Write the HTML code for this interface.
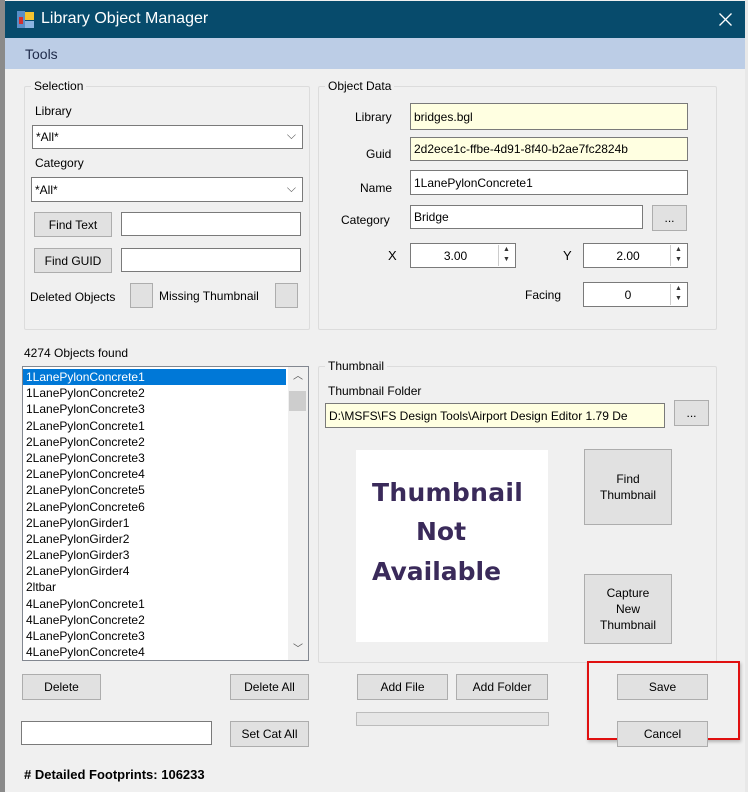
<!DOCTYPE html>
<html><head><meta charset="utf-8"><style>
*{box-sizing:border-box;margin:0;padding:0}
body{width:748px;height:792px;overflow:hidden;background:#f0f0f0;font-family:"Liberation Sans",sans-serif;font-size:12px;color:#000;position:relative}
.a{position:absolute}
.gb{position:absolute;border:1px solid #dcdcdc;border-radius:2px}
.gl{position:absolute;background:#f0f0f0;padding:0 3px;top:-9px;left:6px;line-height:16px}
.btn{position:absolute;background:#e1e1e1;border:1px solid #adadad;text-align:center;display:flex;align-items:center;justify-content:center;line-height:16px}
.tb{position:absolute;background:#fff;border:1px solid #7a7a7a;padding-left:3px;display:flex;align-items:center}
.y{background:#ffffe1}
.chk{position:absolute;width:23px;height:25px;background:#e1e1e1;border:1px solid #adadad}
.spin{position:absolute;right:1px;top:1px;bottom:1px;width:16px;border-left:1px solid #ccc;font-size:7px;line-height:10px;text-align:center;color:#333}
.list div{height:16.2px;line-height:16.2px;padding-left:3px;white-space:nowrap}
.tn{position:absolute;font-family:"DejaVu Sans",sans-serif;font-weight:bold;font-size:25px;line-height:30px;color:#3a2a5a;white-space:nowrap}
</style></head><body>
<div class="a" style="left:0;top:0;width:5px;height:792px;background:#8a8a8a"></div>
<div class="a" style="left:745px;top:0;width:3px;height:792px;background:#e8e8e8"></div>
<div class="a" style="left:5px;top:1px;width:740px;height:37px;background:#074b6c"></div>
<div class="a" style="left:17px;top:11px;width:18px;height:17px">
<div class="a" style="left:0;top:0;width:8px;height:17px;background:#5a8fc7"></div>
<div class="a" style="left:2px;top:6px;width:4px;height:7px;background:#d23030"></div>
<div class="a" style="left:8px;top:1px;width:9px;height:8px;background:#f4c430"></div>
<div class="a" style="left:8px;top:10px;width:9px;height:7px;background:#8cb4e0"></div>
</div>
<div class="a" style="left:41px;top:10px;color:#fff;font-size:16px">Library Object Manager</div>
<svg class="a" style="left:719px;top:13px" width="13" height="13"><path d="M0.5 0.5L12.5 12.5M12.5 0.5L0.5 12.5" stroke="#fff" stroke-width="1.3"/></svg>
<div class="a" style="left:5px;top:38px;width:740px;height:31px;background:#bccde6"></div>
<div class="a" style="left:25px;top:46px;font-size:14px;color:#1e2a4a">Tools</div>

<div class="gb" style="left:24px;top:86px;width:286px;height:244px"><div class="gl">Selection</div></div>
<div class="a" style="left:35px;top:104px">Library</div>
<div class="tb" style="left:32px;top:125px;width:271px;height:24px">*All*<span class="a" style="right:6px;top:2px;color:#555">⌵</span></div>
<div class="a" style="left:35px;top:156px">Category</div>
<div class="tb" style="left:31px;top:177px;width:272px;height:25px">*All*<span class="a" style="right:6px;top:3px;color:#555">⌵</span></div>
<div class="btn" style="left:34px;top:212px;width:78px;height:25px">Find Text</div>
<div class="tb" style="left:121px;top:212px;width:180px;height:24px"></div>
<div class="btn" style="left:34px;top:248px;width:78px;height:25px">Find GUID</div>
<div class="tb" style="left:121px;top:248px;width:180px;height:24px"></div>
<div class="a" style="left:30px;top:290px">Deleted Objects</div>
<div class="chk" style="left:130px;top:283px"></div>
<div class="a" style="left:159px;top:289px">Missing Thumbnail</div>
<div class="chk" style="left:275px;top:283px"></div>

<div class="gb" style="left:318px;top:86px;width:399px;height:244px"><div class="gl">Object Data</div></div>
<div class="a" style="left:355px;top:110px">Library</div>
<div class="tb y" style="left:410px;top:103px;width:278px;height:27px">bridges.bgl</div>
<div class="a" style="left:366px;top:147px">Guid</div>
<div class="tb y" style="left:410px;top:137px;width:278px;height:24px">2d2ece1c-ffbe-4d91-8f40-b2ae7fc2824b</div>
<div class="a" style="left:360px;top:181px">Name</div>
<div class="tb" style="left:410px;top:170px;width:278px;height:25px">1LanePylonConcrete1</div>
<div class="a" style="left:341px;top:213px">Category</div>
<div class="tb" style="left:410px;top:205px;width:233px;height:24px">Bridge</div>
<div class="btn" style="left:652px;top:205px;width:35px;height:26px">...</div>
<div class="a" style="left:388px;top:248px;font-size:13px">X</div>
<div class="tb" style="left:410px;top:243px;width:106px;height:25px;justify-content:center;padding-right:18px">3.00<div class="spin">▲<br>▼</div></div>
<div class="a" style="left:563px;top:248px;font-size:13px">Y</div>
<div class="tb" style="left:583px;top:243px;width:105px;height:25px;justify-content:center;padding-right:18px">2.00<div class="spin">▲<br>▼</div></div>
<div class="a" style="left:525px;top:288px">Facing</div>
<div class="tb" style="left:583px;top:282px;width:105px;height:25px;justify-content:center;padding-right:18px">0<div class="spin">▲<br>▼</div></div>

<div class="a" style="left:24px;top:346px">4274 Objects found</div>
<div class="a list" style="left:22px;top:366px;width:287px;height:295px;background:#fff;border:1px solid #828790;padding-top:2px;overflow:hidden">
<div style="background:#0078d7;color:#fff;width:263px">1LanePylonConcrete1</div>
<div>1LanePylonConcrete2</div><div>1LanePylonConcrete3</div><div>2LanePylonConcrete1</div><div>2LanePylonConcrete2</div><div>2LanePylonConcrete3</div><div>2LanePylonConcrete4</div><div>2LanePylonConcrete5</div><div>2LanePylonConcrete6</div><div>2LanePylonGirder1</div><div>2LanePylonGirder2</div><div>2LanePylonGirder3</div><div>2LanePylonGirder4</div><div>2ltbar</div><div>4LanePylonConcrete1</div><div>4LanePylonConcrete2</div><div>4LanePylonConcrete3</div><div>4LanePylonConcrete4</div>
<div class="a" style="right:0;top:0;width:20px;height:293px;background:#f0f0f0;padding:0"></div>
<div class="a" style="right:2px;top:24px;width:17px;height:20px;background:#cdcdcd;padding:0"></div>
<div class="a" style="right:3px;top:3px;width:14px;font-size:10px;color:#555;text-align:center;padding:0;height:14px;line-height:14px">︿</div>
<div class="a" style="right:3px;bottom:3px;width:14px;font-size:10px;color:#555;text-align:center;padding:0;height:14px;line-height:14px">﹀</div>
</div>

<div class="gb" style="left:318px;top:366px;width:399px;height:297px"><div class="gl">Thumbnail</div></div>
<div class="a" style="left:328px;top:384px">Thumbnail Folder</div>
<div class="tb y" style="left:325px;top:403px;width:340px;height:25px;white-space:nowrap;overflow:hidden">D:\MSFS\FS Design Tools\Airport Design Editor 1.79 De</div>
<div class="btn" style="left:674px;top:400px;width:35px;height:26px">...</div>
<div class="a" style="left:356px;top:450px;width:192px;height:192px;background:#fff"></div>
<div class="tn" style="left:372px;top:478px;letter-spacing:0.3px">Thumbnail</div>
<div class="tn" style="left:416px;top:517px">Not</div>
<div class="tn" style="left:372px;top:557px">Available</div>
<div class="btn" style="left:584px;top:449px;width:88px;height:76px">Find<br>Thumbnail</div>
<div class="btn" style="left:584px;top:574px;width:88px;height:70px">Capture<br>New<br>Thumbnail</div>

<div class="btn" style="left:22px;top:674px;width:79px;height:26px">Delete</div>
<div class="btn" style="left:230px;top:674px;width:79px;height:26px">Delete All</div>
<div class="btn" style="left:357px;top:674px;width:91px;height:26px">Add File</div>
<div class="btn" style="left:456px;top:674px;width:92px;height:26px">Add Folder</div>
<div class="a" style="left:356px;top:712px;width:193px;height:14px;background:#e6e6e6;border:1px solid #bcbcbc"></div>
<div class="tb" style="left:21px;top:721px;width:191px;height:24px"></div>
<div class="btn" style="left:230px;top:721px;width:79px;height:26px">Set Cat All</div>
<div class="btn" style="left:617px;top:674px;width:91px;height:26px">Save</div>
<div class="a" style="left:587px;top:661px;width:153px;height:79px;border:2px solid #e01010;box-shadow:1px 2px 3px rgba(0,0,0,.25)"></div>
<div class="btn" style="left:617px;top:721px;width:91px;height:26px">Cancel</div>
<div class="a" style="left:24px;top:767px;font-weight:bold;font-size:13px">#&nbsp;Detailed Footprints: 106233</div>
</body></html>
